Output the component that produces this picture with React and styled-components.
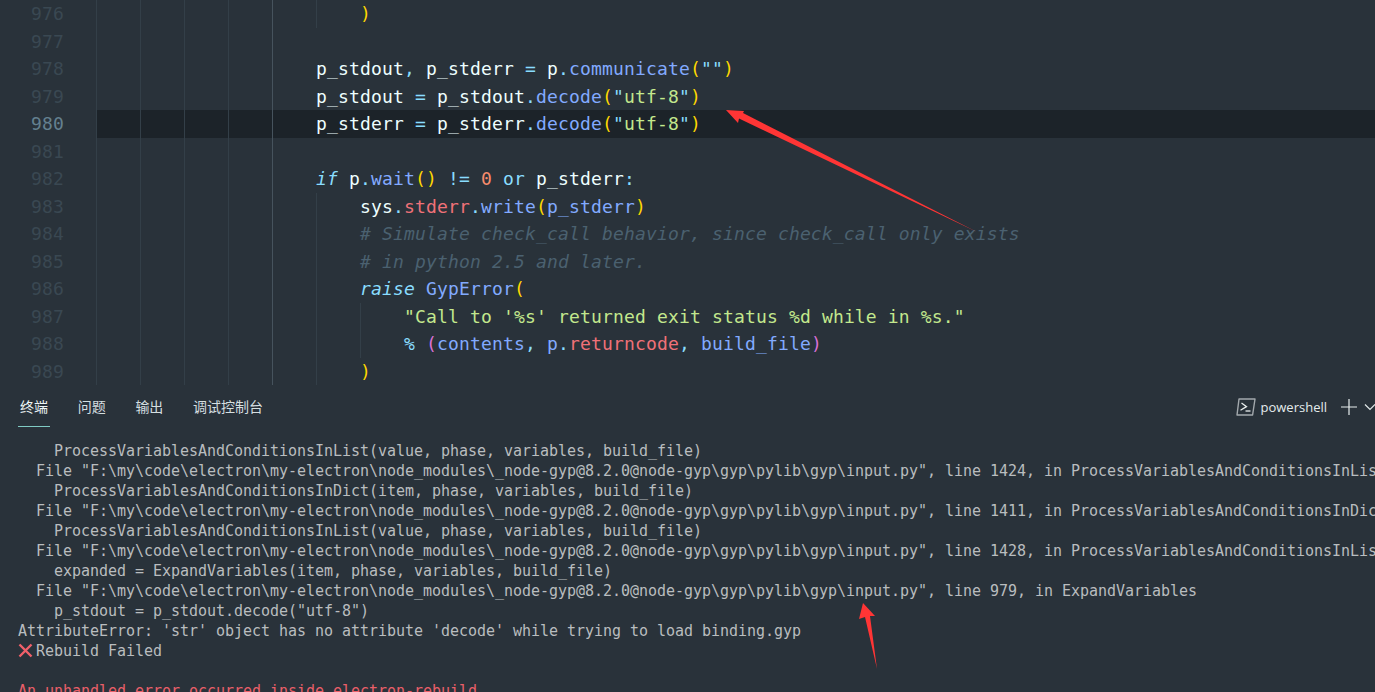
import React from "react";
import styled, { createGlobalStyle } from "styled-components";

const colors = {
  text: "#eeffff",
  op: "#89ddff",
  fn: "#82aaff",
  prop: "#f07178",
  str: "#c3e88d",
  num: "#f78c6c",
  gold: "#ffd700",
  pink: "#da70d6",
  comment: "#4b6170",
};

const Global = createGlobalStyle`
  html, body {
    margin: 0;
    height: 100%;
    overflow: hidden;
    background: #29323a;
  }
`;

const Page = styled.div`
  position: relative;
  width: 1375px;
  height: 692px;
  overflow: hidden;
  display: flex;
  flex-direction: column;
  background: #29323a;
`;

const Editor = styled.div`
  height: 385px;
  flex: none;
  overflow: hidden;
  font-family: "DejaVu Sans Mono", monospace;
  font-size: 18px;
  letter-spacing: 0.16px;
`;

const Row = styled.div`
  display: flex;
  height: 27.5px;
  line-height: 27.5px;
  white-space: pre;
`;

const LineNumber = styled.div`
  flex: none;
  width: 64px;
  margin-right: 32px;
  text-align: right;
  color: ${({ $active }) => ($active ? "#64808f" : "#3a4852")};
`;

const Code = styled.div`
  flex: 1;
  display: flex;
  background: ${({ $active }) => ($active ? "#1c2329" : "transparent")};
  color: ${colors.text};
`;

const Guide = styled.span`
  flex: none;
  width: 44px;
  box-sizing: border-box;
  border-left: 1px solid ${({ $active }) => ($active ? "#46535d" : "#333f48")};
`;

const Tok = styled.span`
  color: ${({ $c }) => colors[$c] || colors.text};
  font-style: ${({ $i }) => ($i ? "italic" : "normal")};
`;

const Panel = styled.div`
  flex: 1;
  min-height: 0;
  display: flex;
  flex-direction: column;
`;

const TabBar = styled.div`
  flex: none;
  height: 42px;
  padding: 0 0 0 18px;
  display: flex;
  align-items: stretch;
  gap: 25.7px;
`;

const Tab = styled.div`
  padding: 11px 2px 0;
  height: 42px;
  box-sizing: border-box;
  font-family: "Noto Sans CJK SC", sans-serif;
  font-size: 14px;
  line-height: 20px;
  color: ${({ $active }) => ($active ? "#eef6f6" : "#d5dfe0")};
  border-bottom: 1px solid ${({ $active }) => ($active ? "#80cbc4" : "transparent")};
`;

const TabActions = styled.div`
  margin-left: auto;
  display: flex;
  align-items: center;
  height: 44px;
  margin-right: -1px;
  color: #e4ecec;
`;

const ShellName = styled.span`
  margin: 0 13px 0 5px;
  font-family: "Open Sans", sans-serif;
  font-size: 13px;
`;

const Output = styled.div`
  flex: 1;
  padding: 14px 0 0 18px;
  font-family: "DejaVu Sans Mono", monospace;
  font-size: 15px;
  letter-spacing: -0.03px;
  line-height: 20px;
  color: #b9bdbf;
  white-space: pre;
  overflow: hidden;
`;

const OutputLine = styled.div`
  height: 20px;
  color: ${({ $error }) => ($error ? "#ea5f69" : "inherit")};
`;

const FailMark = styled.svg`
  display: inline-block;
  width: 15px;
  height: 15px;
  margin-right: 3px;
  vertical-align: -2px;
`;

const Annotations = styled.svg`
  position: absolute;
  left: 0;
  top: 0;
  pointer-events: none;
`;

const code = [
  { n: 976, g: 6, t: <Tok $c="gold">)</Tok> },
  { n: 977, g: 5 },
  {
    n: 978,
    g: 5,
    t: (
      <>
        p_stdout<Tok $c="op">,</Tok> p_stderr <Tok $c="op">=</Tok> p<Tok $c="op">.</Tok>
        <Tok $c="fn">communicate</Tok><Tok $c="gold">(</Tok><Tok $c="op">"</Tok><Tok $c="op">"</Tok><Tok $c="gold">)</Tok>
      </>
    ),
  },
  {
    n: 979,
    g: 5,
    t: (
      <>
        p_stdout <Tok $c="op">=</Tok> p_stdout<Tok $c="op">.</Tok><Tok $c="fn">decode</Tok>
        <Tok $c="gold">(</Tok><Tok $c="op">"</Tok><Tok $c="str">utf-8</Tok><Tok $c="op">"</Tok><Tok $c="gold">)</Tok>
      </>
    ),
  },
  {
    n: 980,
    g: 5,
    active: true,
    t: (
      <>
        p_stderr <Tok $c="op">=</Tok> p_stderr<Tok $c="op">.</Tok><Tok $c="fn">decode</Tok>
        <Tok $c="gold">(</Tok><Tok $c="op">"</Tok><Tok $c="str">utf-8</Tok><Tok $c="op">"</Tok><Tok $c="gold">)</Tok>
      </>
    ),
  },
  { n: 981, g: 5 },
  {
    n: 982,
    g: 5,
    t: (
      <>
        <Tok $c="op" $i>if</Tok> p<Tok $c="op">.</Tok><Tok $c="fn">wait</Tok><Tok $c="gold">()</Tok> <Tok $c="op">!=</Tok>{" "}
        <Tok $c="num">0</Tok> <Tok $c="op">or</Tok> p_stderr<Tok $c="op">:</Tok>
      </>
    ),
  },
  {
    n: 983,
    g: 6,
    t: (
      <>
        sys<Tok $c="op">.</Tok><Tok $c="prop">stderr</Tok><Tok $c="op">.</Tok><Tok $c="fn">write</Tok>
        <Tok $c="gold">(</Tok><Tok $c="fn">p_stderr</Tok><Tok $c="gold">)</Tok>
      </>
    ),
  },
  { n: 984, g: 6, t: <Tok $c="comment" $i># Simulate check_call behavior, since check_call only exists</Tok> },
  { n: 985, g: 6, t: <Tok $c="comment" $i># in python 2.5 and later.</Tok> },
  {
    n: 986,
    g: 6,
    t: (
      <>
        <Tok $c="op" $i>raise</Tok> <Tok $c="fn">GypError</Tok><Tok $c="gold">(</Tok>
      </>
    ),
  },
  {
    n: 987,
    g: 7,
    t: <Tok $c="str">"Call to '%s' returned exit status %d while in %s."</Tok>,
  },
  {
    n: 988,
    g: 7,
    t: (
      <>
        <Tok $c="op">%</Tok> <Tok $c="pink">(</Tok><Tok $c="fn">contents</Tok><Tok $c="op">,</Tok> <Tok $c="fn">p</Tok>
        <Tok $c="op">.</Tok><Tok $c="prop">returncode</Tok><Tok $c="op">,</Tok> <Tok $c="fn">build_file</Tok><Tok $c="pink">)</Tok>
      </>
    ),
  },
  { n: 989, g: 6, t: <Tok $c="gold">)</Tok> },
];

const gypPath = `"F:\\my\\code\\electron\\my-electron\\node_modules\\_node-gyp@8.2.0@node-gyp\\gyp\\pylib\\gyp\\input.py"`;

const output = [
  "    ProcessVariablesAndConditionsInList(value, phase, variables, build_file)",
  `  File ${gypPath}, line 1424, in ProcessVariablesAndConditionsInList`,
  "    ProcessVariablesAndConditionsInDict(item, phase, variables, build_file)",
  `  File ${gypPath}, line 1411, in ProcessVariablesAndConditionsInDict`,
  "    ProcessVariablesAndConditionsInList(value, phase, variables, build_file)",
  `  File ${gypPath}, line 1428, in ProcessVariablesAndConditionsInList`,
  "    expanded = ExpandVariables(item, phase, variables, build_file)",
  `  File ${gypPath}, line 979, in ExpandVariables`,
  '    p_stdout = p_stdout.decode("utf-8")',
  "AttributeError: 'str' object has no attribute 'decode' while trying to load binding.gyp",
];

const tabs = ["终端", "问题", "输出", "调试控制台"];

function ShellIcon() {
  return (
    <svg width="20" height="18" viewBox="0 0 20 18" fill="none">
      <path d="M3 1h16l-2.4 16H1z" stroke="#a3a9ad" strokeWidth="1.4" strokeLinejoin="round" />
      <path d="M5.5 5l5 3.6-6 3.6" stroke="#e8eeee" strokeWidth="1.3" />
      <path d="M9.5 13h5" stroke="#e8eeee" strokeWidth="1.3" />
    </svg>
  );
}

function PlusIcon() {
  return (
    <svg width="18" height="18" viewBox="0 0 18 18" fill="none">
      <path d="M1 9h16M9 1v16" stroke="#e8eeee" strokeWidth="1.2" />
    </svg>
  );
}

function ChevronIcon() {
  return (
    <svg width="12" height="8" viewBox="0 0 12 8" fill="none" style={{ marginLeft: 6 }}>
      <path d="M1 1.5l5 5 5-5" stroke="#e0e8e8" strokeWidth="1.2" />
    </svg>
  );
}

export default function App() {
  return (
    <Page>
      <Global />
      <Editor>
        {code.map((line) => (
          <Row key={line.n}>
            <LineNumber $active={line.active}>{line.n}</LineNumber>
            <Code $active={line.active}>
              {Array.from({ length: line.g }, (_, i) => (
                <Guide key={i} $active={i === 4} />
              ))}
              <span>{line.t}</span>
            </Code>
          </Row>
        ))}
      </Editor>
      <Panel>
        <TabBar>
          {tabs.map((tab, i) => (
            <Tab key={tab} $active={i === 0}>{tab}</Tab>
          ))}
          <TabActions>
            <ShellIcon />
            <ShellName>powershell</ShellName>
            <PlusIcon />
            <ChevronIcon />
          </TabActions>
        </TabBar>
        <Output>
          {output.map((line, i) => (
            <OutputLine key={i}>{line}</OutputLine>
          ))}
          <OutputLine>
            <FailMark viewBox="0 0 15 15">
              <path d="M1.5 1.5l12 12M13.5 1.5l-12 12" stroke="#f0606a" strokeWidth="2.4" />
            </FailMark>
            Rebuild Failed
          </OutputLine>
          <OutputLine />
          <OutputLine $error>An unhandled error occurred inside electron-rebuild</OutputLine>
        </Output>
      </Panel>
      <Annotations width="1375" height="692">
        <polygon points="726,110 744,111 743,113 977,232 739,118.5 738,123" fill="#ff3535" />
        <polygon points="863,603 875,616 870,616 877,669 865,617 859,619" fill="#ff3535" />
      </Annotations>
    </Page>
  );
}
